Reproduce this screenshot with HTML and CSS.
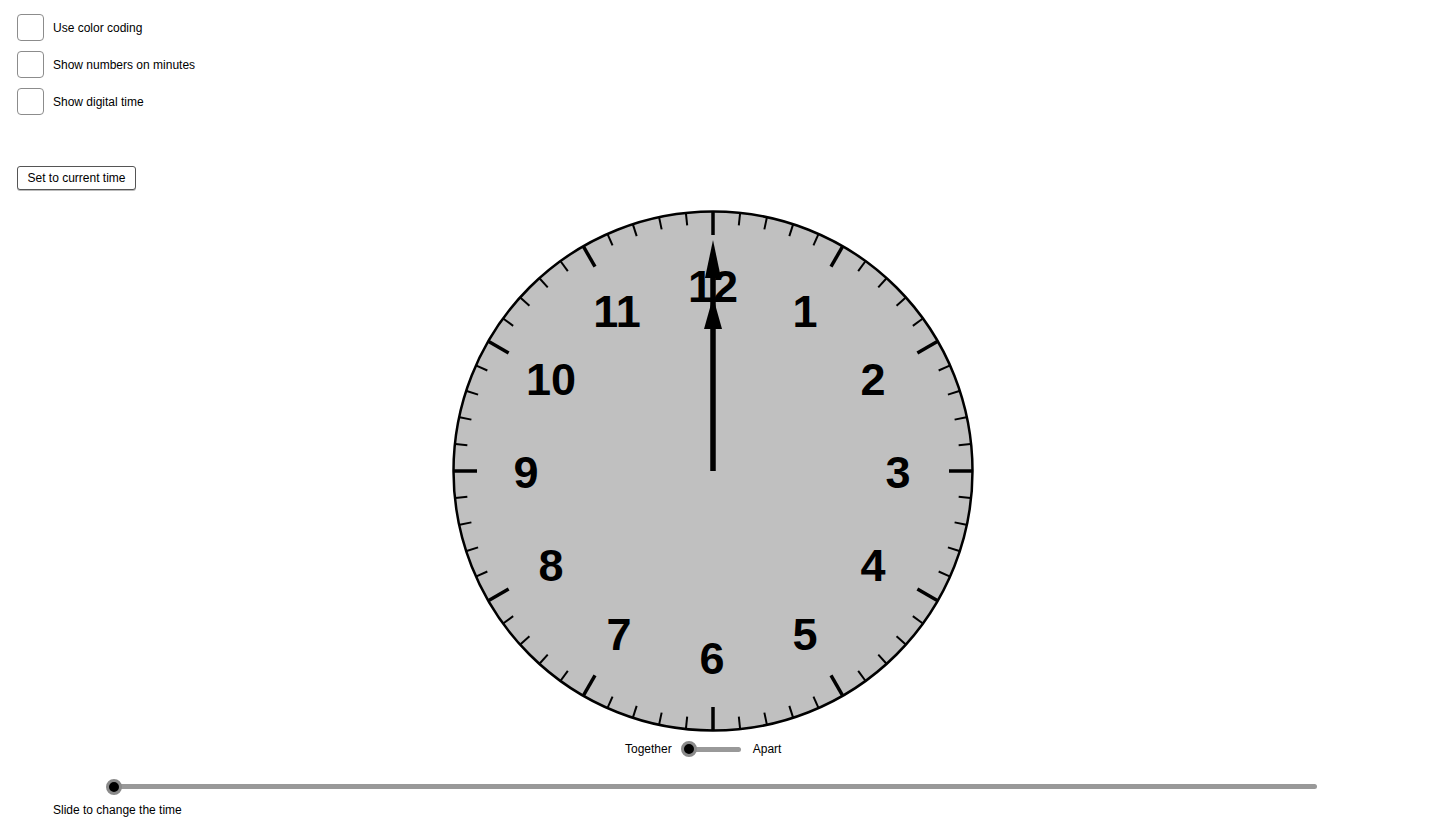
FILE: index.html
```html
<!DOCTYPE html>
<html>
<head>
<meta charset="utf-8">
<link rel="stylesheet" href="styles.css">
</head>
<body>
<div class="applet">
  <div class="options">
    <label class="opt"><span class="box"></span><span class="txt">Use color coding</span></label>
    <label class="opt"><span class="box"></span><span class="txt">Show numbers on minutes</span></label>
    <label class="opt"><span class="box"></span><span class="txt">Show digital time</span></label>
  </div>
  <button class="btn">Set to current time</button>
  <svg class="clock" width="524" height="524" viewBox="0 0 524 524">
    <defs>
      <line id="mt" x1="0" y1="-259" x2="0" y2="-247" stroke="#000" stroke-width="2"/>
      <line id="ht" x1="0" y1="-259" x2="0" y2="-236" stroke="#000" stroke-width="3.5"/>
    </defs>
    <g transform="translate(262,262)">
      <circle r="259.5" fill="#c0c0c0" stroke="#000" stroke-width="2.5"/>
      <use href="#ht" transform="rotate(0)"/><use href="#mt" transform="rotate(6)"/><use href="#mt" transform="rotate(12)"/><use href="#mt" transform="rotate(18)"/><use href="#mt" transform="rotate(24)"/>
      <use href="#ht" transform="rotate(30)"/><use href="#mt" transform="rotate(36)"/><use href="#mt" transform="rotate(42)"/><use href="#mt" transform="rotate(48)"/><use href="#mt" transform="rotate(54)"/>
      <use href="#ht" transform="rotate(60)"/><use href="#mt" transform="rotate(66)"/><use href="#mt" transform="rotate(72)"/><use href="#mt" transform="rotate(78)"/><use href="#mt" transform="rotate(84)"/>
      <use href="#ht" transform="rotate(90)"/><use href="#mt" transform="rotate(96)"/><use href="#mt" transform="rotate(102)"/><use href="#mt" transform="rotate(108)"/><use href="#mt" transform="rotate(114)"/>
      <use href="#ht" transform="rotate(120)"/><use href="#mt" transform="rotate(126)"/><use href="#mt" transform="rotate(132)"/><use href="#mt" transform="rotate(138)"/><use href="#mt" transform="rotate(144)"/>
      <use href="#ht" transform="rotate(150)"/><use href="#mt" transform="rotate(156)"/><use href="#mt" transform="rotate(162)"/><use href="#mt" transform="rotate(168)"/><use href="#mt" transform="rotate(174)"/>
      <use href="#ht" transform="rotate(180)"/><use href="#mt" transform="rotate(186)"/><use href="#mt" transform="rotate(192)"/><use href="#mt" transform="rotate(198)"/><use href="#mt" transform="rotate(204)"/>
      <use href="#ht" transform="rotate(210)"/><use href="#mt" transform="rotate(216)"/><use href="#mt" transform="rotate(222)"/><use href="#mt" transform="rotate(228)"/><use href="#mt" transform="rotate(234)"/>
      <use href="#ht" transform="rotate(240)"/><use href="#mt" transform="rotate(246)"/><use href="#mt" transform="rotate(252)"/><use href="#mt" transform="rotate(258)"/><use href="#mt" transform="rotate(264)"/>
      <use href="#ht" transform="rotate(270)"/><use href="#mt" transform="rotate(276)"/><use href="#mt" transform="rotate(282)"/><use href="#mt" transform="rotate(288)"/><use href="#mt" transform="rotate(294)"/>
      <use href="#ht" transform="rotate(300)"/><use href="#mt" transform="rotate(306)"/><use href="#mt" transform="rotate(312)"/><use href="#mt" transform="rotate(318)"/><use href="#mt" transform="rotate(324)"/>
      <use href="#ht" transform="rotate(330)"/><use href="#mt" transform="rotate(336)"/><use href="#mt" transform="rotate(342)"/><use href="#mt" transform="rotate(348)"/><use href="#mt" transform="rotate(354)"/>
      <g class="num">
        <text x="0" y="-169">12</text>
        <text x="92" y="-144">1</text>
        <text x="160" y="-76">2</text>
        <text x="185" y="17">3</text>
        <text x="160" y="110">4</text>
        <text x="92" y="179">5</text>
        <text x="-1" y="203">6</text>
        <text x="-94" y="179">7</text>
        <text x="-162" y="110">8</text>
        <text x="-187" y="17">9</text>
        <text x="-162" y="-76">10</text>
        <text x="-96" y="-144">11</text>
      </g>
      <line x1="0" y1="0" x2="0" y2="-200" stroke="#000" stroke-width="5.5"/>
      <polygon points="0,-231 -8,-193 8,-193" fill="#000"/>
      <polygon points="0,-174 -9,-142 9,-142" fill="#000"/>
    </g>
  </svg>
  <div class="spread">
    <span class="lbl">Together</span>
    <div class="slider short"><span class="knob"></span></div>
    <span class="lbl">Apart</span>
  </div>
  <div class="slider long"><span class="knob"></span></div>
  <div class="caption">Slide to change the time</div>
</div>
</body>
</html>
```
FILE: styles.css
```css
html, body {
  margin: 0;
  padding: 0;
  background: #fff;
}
body {
  font-family: "Liberation Sans", Arial, sans-serif;
  font-size: 12px;
  color: #000;
}
.applet {
  width: 1431px;
  height: 827px;
  display: flex;
  flex-direction: column;
  align-items: flex-start;
  overflow: hidden;
}
.options {
  display: flex;
  flex-direction: column;
  gap: 10px;
  padding: 14px 0 0 17px;
}
.opt {
  display: flex;
  align-items: center;
  height: 27px;
}
.box {
  width: 25px;
  height: 25px;
  border: 1px solid #8c8c8c;
  border-radius: 4px;
  background: #fff;
  box-sizing: content-box;
}
.txt {
  margin-left: 9px;
  font-size: 12px;
}
.btn {
  margin: 51px 0 0 17px;
  height: 24px;
  width: 119px;
  padding: 0;
  border: 1px solid #555;
  border-radius: 3px;
  background: #fff;
  font-family: "Liberation Sans", Arial, sans-serif;
  font-size: 12px;
  color: #000;
  box-shadow: 0 1px 0 #bbb;
}
.clock {
  display: block;
  margin: 19px 0 0 451px;
}
.num text {
  font-family: "Liberation Sans", Arial, sans-serif;
  font-weight: bold;
  font-size: 45px;
  text-anchor: middle;
  fill: #000;
}
.spread {
  display: flex;
  align-items: center;
  margin: 9px 0 0 625px;
  height: 14px;
}
.lbl {
  font-size: 12px;
}
.slider {
  position: relative;
  height: 5px;
  background: #999;
  border-radius: 3px;
}
.slider.short {
  width: 57px;
  margin: 0 12px 0 12px;
}
.slider.long {
  width: 1208px;
  margin: 28px 0 0 109px;
}
.knob {
  position: absolute;
  left: -3px;
  top: 50%;
  width: 10px;
  height: 10px;
  margin-top: -8px;
  border-radius: 50%;
  background: #000;
  border: 3px solid #8a8a8a;
}
.caption {
  margin: 14px 0 0 53px;
  font-size: 12px;
}
```
